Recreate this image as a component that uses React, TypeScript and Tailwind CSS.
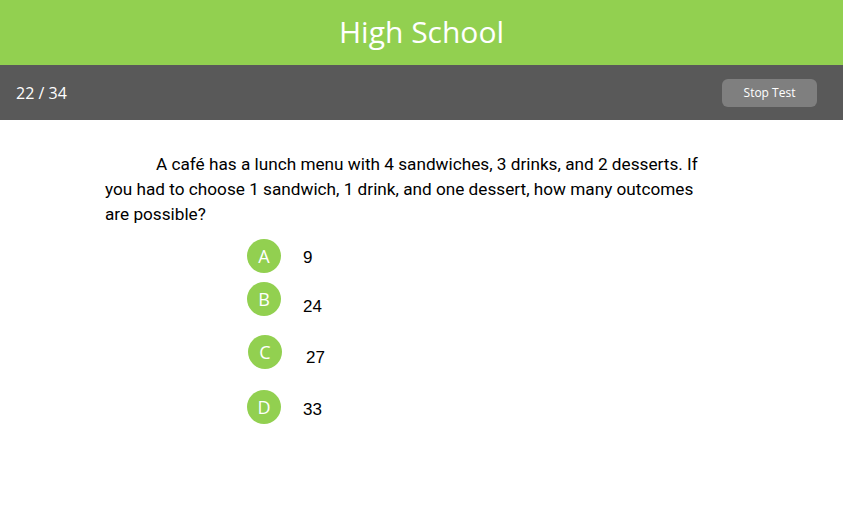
import React from "react"

const answers = [
  { letter: "A", value: "9", mt: "mt-[12px]", ml: "ml-[247px]", textMt: "mt-[9px]", textMl: "ml-[22px]" },
  { letter: "B", value: "24", mt: "mt-[9px]", ml: "ml-[247px]", textMt: "mt-[15px]", textMl: "ml-[22px]" },
  { letter: "C", value: "27", mt: "mt-[19px]", ml: "ml-[248px]", textMt: "mt-[13px]", textMl: "ml-[24px]" },
  { letter: "D", value: "33", mt: "mt-[21px]", ml: "ml-[247px]", textMt: "mt-[10px]", textMl: "ml-[22px]" },
]

export default function App() {
  return (
    <div className="w-[843px] h-[517px] bg-white overflow-hidden">
      <header className="h-[65px] bg-[#92d050] flex items-center justify-center">
        <h1 className="text-white text-[30px] font-['Open_Sans',sans-serif] leading-none -mt-[1px]">High School</h1>
      </header>
      <div className="h-[55px] bg-[#595959] flex items-center justify-between px-[16px]">
        <span className="text-white text-[16px] font-['Open_Sans',sans-serif]">22 / 34</span>
        <button className="w-[95px] h-[28px] mr-[10px] rounded-[6px] bg-[#7f7f7f] text-white text-[12px] font-['Open_Sans',sans-serif]">
          Stop Test
        </button>
      </div>
      <div className="pl-[105px] pt-[32px] w-[712px]">
        <p className="text-[17.2px] leading-[25px] text-black font-['Roboto',sans-serif] indent-[51px]">
          A café has a lunch menu with 4 sandwiches, 3 drinks, and 2 desserts. If you had to choose 1 sandwich, 1 drink, and one dessert, how many outcomes are possible?
        </p>
      </div>
      <div className="flex flex-col">
        {answers.map((a) => (
          <div key={a.letter} className={`flex items-start h-[34px] ${a.mt} ${a.ml}`}>
            <div className="w-[34px] h-[34px] shrink-0 rounded-full bg-[#92d050] flex items-center justify-center text-white text-[18px] font-['Open_Sans',sans-serif]">
              {a.letter}
            </div>
            <span className={`${a.textMt} ${a.textMl} text-[17px] leading-[20px] text-black font-['Liberation_Sans',sans-serif]`}>
              {a.value}
            </span>
          </div>
        ))}
      </div>
    </div>
  )
}
